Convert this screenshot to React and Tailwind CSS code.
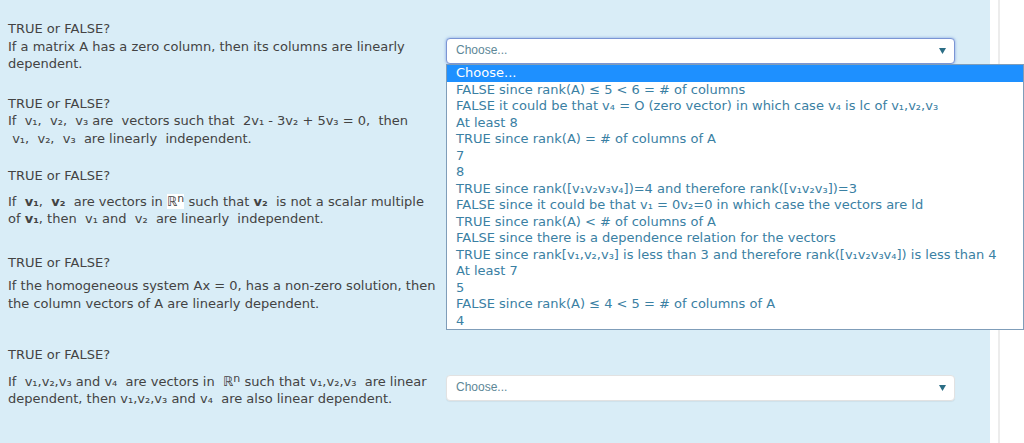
import React from 'react';

// Options of the open dropdown
const OPTIONS = [
  'Choose...',
  'FALSE since rank(A) ≤ 5 < 6 = # of columns',
  'FALSE it could be that v₄ = O (zero vector) in which case v₄ is lc of v₁,v₂,v₃',
  'At least 8',
  'TRUE since rank(A) = # of columns of A',
  '7',
  '8',
  'TRUE since rank([v₁v₂v₃v₄])=4 and therefore rank([v₁v₂v₃])=3',
  'FALSE since it could be that v₁ = 0v₂=0 in which case the vectors are ld',
  'TRUE since rank(A) < # of columns of A',
  'FALSE since there is a dependence relation for the vectors',
  'TRUE since rank[v₁,v₂,v₃] is less than 3 and therefore rank([v₁v₂v₃v₄]) is less than 4',
  'At least 7',
  '5',
  'FALSE since rank(A) ≤ 4 < 5 = # of columns of A',
  '4'
];

const Select = ({ focused = false, className = '' }) => (
  <div
    className={`w-[509px] h-[26px] shrink-0 flex items-center justify-between pl-[9px] pr-[8px] bg-white rounded-[4px] border ${
      focused
        ? 'border-[#7b95d4] shadow-[0_0_3px_rgba(90,130,215,0.7)]'
        : 'border-[#e2e2e2] shadow-[0_1px_1px_rgba(0,0,0,0.05)]'
    } ${className}`}
  >
    <span className="font-['Liberation_Sans',sans-serif] text-[12px] text-[#5d8797]">Choose...</span>
    <svg width="7" height="6" viewBox="0 0 7 6">
      <path d="M0 0H7L3.5 6Z" fill="#2b6d85" />
    </svg>
  </div>
);

const Header = () => <div>TRUE or FALSE?</div>;

// R^n, superscript nudged up without growing the line box
const Rn = ({ bg = false }) => (
  <span className={bg ? 'bg-white' : ''}>
    ℝ<span className="relative -top-[4px] text-[11px] leading-none">n</span>
  </span>
);

export default function App() {
  return (
    <div className="relative w-[1024px] h-[443px] overflow-hidden flex bg-white font-['DejaVu_Sans',sans-serif] text-[13px] leading-[17.5px] text-[#434343]">
      {/* Question panel */}
      <div className="w-[990px] bg-[#d9edf7] pl-[8px] pt-[20px]">
        {/* Q1 */}
        <div className="flex gap-[10px]">
          <div className="w-[428px]">
            <Header />
            <p>If a matrix A has a zero column, then its columns are linearly dependent.</p>
          </div>
          <Select focused className="mt-[18px]" />
        </div>

        {/* Q2 */}
        <div className="flex gap-[10px] mt-[22px]">
          <div className="w-[428px]">
            <Header />
            <p>
              If&nbsp; v₁,&nbsp; v₂,&nbsp; v₃ are&nbsp; vectors such that&nbsp; 2v₁ - 3v₂ + 5v₃ = 0,&nbsp; then
              <br />
              &nbsp;v₁,&nbsp; v₂,&nbsp; v₃&nbsp; are linearly&nbsp; independent.
            </p>
          </div>
          <Select className="mt-[18px]" />
        </div>

        {/* Q3 */}
        <div className="flex gap-[10px] mt-[20px]">
          <div className="w-[428px]">
            <Header />
            <p className="mt-[8px]">
              If&nbsp; <b>v₁</b>,&nbsp; <b>v₂</b>&nbsp; are vectors in <Rn bg /> such that <b>v₂</b>&nbsp; is not a scalar multiple of <b>v₁</b>, then&nbsp; v₁ and&nbsp; v₂&nbsp; are linearly&nbsp; independent.
            </p>
          </div>
          <Select className="mt-[25px]" />
        </div>

        {/* Q4 */}
        <div className="flex gap-[10px] mt-[26px]">
          <div className="w-[428px]">
            <Header />
            <p className="mt-[6px]">
              If the homogeneous system Ax = 0, has a non-zero solution, then the column vectors of A are linearly dependent.
            </p>
          </div>
          <Select className="mt-[30px]" />
        </div>

        {/* Q5 */}
        <div className="flex gap-[10px] mt-[34px]">
          <div className="w-[428px]">
            <Header />
            <p className="mt-[9px]">
              If&nbsp; v₁,v₂,v₃ and v₄&nbsp; are vectors in&nbsp; <Rn /> such that v₁,v₂,v₃&nbsp; are linear dependent, then v₁,v₂,v₃ and v₄&nbsp; are also linear dependent.
            </p>
          </div>
          <Select className="mt-[29px]" />
        </div>
      </div>

      {/* Right gutter */}
      <div className="w-[8px] bg-white" />
      <div className="w-[2px] bg-[#ececec]" />
      <div className="flex-1 bg-white" />

      {/* Open dropdown list */}
      <ul className="absolute left-[446px] top-[64px] w-[578px] bg-white border border-[#7f9db9] leading-[16.5px] text-[#3a80a3] whitespace-nowrap overflow-hidden">
        {OPTIONS.map((opt, i) => (
          <li
            key={i}
            className={`pl-[9px] ${i === 0 ? 'bg-[#1e90ff] text-white' : ''}`}
          >
            {opt}
          </li>
        ))}
      </ul>
    </div>
  );
}
